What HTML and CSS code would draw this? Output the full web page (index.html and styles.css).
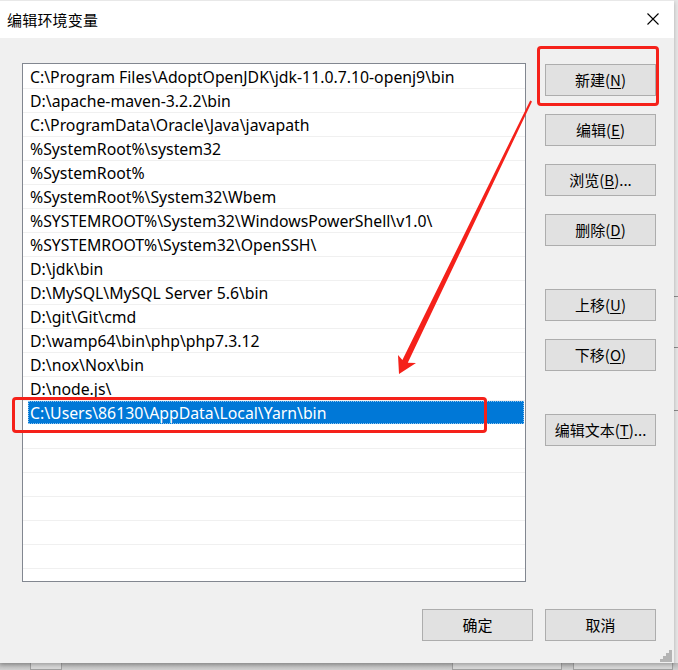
FILE: index.html
```html
<!DOCTYPE html>
<html lang="zh-CN">
<head>
<meta charset="utf-8">
<title>编辑环境变量</title>
<link rel="stylesheet" href="styles.css">
</head>
<body>
<div class="screen">
  <div class="backdrop-right">
    <div class="bd-line l1"></div>
    <div class="bd-line l2"></div>
    <div class="bd-line l3"></div>
  </div>
  <div class="backdrop-bottom">
    <div class="bb-piece p1"></div>
    <div class="bb-piece p2"></div>
    <div class="bb-piece p3"></div>
  </div>
  <div class="window">
    <div class="titlebar">
      <span class="title">编辑环境变量</span>
      <svg class="close" width="12" height="12" viewBox="0 0 12 12"><path d="M0.5 0.5 L11.5 11.5 M11.5 0.5 L0.5 11.5" stroke="#000" stroke-width="1.1" fill="none"/></svg>
    </div>
    <div class="content">
      <div class="main">
        <div class="listbox">
          <div class="row">C:\Program Files\AdoptOpenJDK\jdk-11.0.7.10-openj9\bin</div>
          <div class="row">D:\apache-maven-3.2.2\bin</div>
          <div class="row">C:\ProgramData\Oracle\Java\javapath</div>
          <div class="row">%SystemRoot%\system32</div>
          <div class="row">%SystemRoot%</div>
          <div class="row">%SystemRoot%\System32\Wbem</div>
          <div class="row">%SYSTEMROOT%\System32\WindowsPowerShell\v1.0\</div>
          <div class="row">%SYSTEMROOT%\System32\OpenSSH\</div>
          <div class="row">D:\jdk\bin</div>
          <div class="row">D:\MySQL\MySQL Server 5.6\bin</div>
          <div class="row">D:\git\Git\cmd</div>
          <div class="row">D:\wamp64\bin\php\php7.3.12</div>
          <div class="row">D:\nox\Nox\bin</div>
          <div class="row">D:\node.js\</div>
          <div class="row selected"><span class="sel">C:\Users\86130\AppData\Local\Yarn\bin</span></div>
          <div class="row"></div>
          <div class="row"></div>
          <div class="row"></div>
          <div class="row"></div>
          <div class="row"></div>
          <div class="row"></div>
          <div class="row"></div>
        </div>
        <div class="buttons">
          <div class="group">
            <button class="btn">新建(<u>N</u>)</button>
            <button class="btn">编辑(<u>E</u>)</button>
            <button class="btn">浏览(<u>B</u>)...</button>
            <button class="btn">删除(<u>D</u>)</button>
          </div>
          <div class="group">
            <button class="btn">上移(<u>U</u>)</button>
            <button class="btn">下移(<u>O</u>)</button>
          </div>
          <div class="group">
            <button class="btn">编辑文本(<u>T</u>)...</button>
          </div>
        </div>
      </div>
      <div class="footer">
        <button class="btn">确定</button>
        <button class="btn">取消</button>
      </div>
    </div>
    <svg class="grip" width="12" height="12" viewBox="0 0 12 12" fill="#b4b4b4">
      <rect x="9" y="0" width="3" height="3"/>
      <rect x="6" y="3" width="3" height="3"/><rect x="9" y="3" width="3" height="3"/>
      <rect x="3" y="6" width="3" height="3"/><rect x="6" y="6" width="3" height="3"/><rect x="9" y="6" width="3" height="3"/>
      <rect x="0" y="9" width="3" height="3"/><rect x="3" y="9" width="3" height="3"/><rect x="6" y="9" width="3" height="3"/><rect x="9" y="9" width="3" height="3"/>
    </svg>
  </div>
  <div class="mark mark-new"></div>
  <div class="mark mark-row"></div>
  <svg class="arrow" width="678" height="670" viewBox="0 0 678 670">
    <polygon points="399,374 398,355 402.4,360.1 530.2,100.4 532,101.4 407.8,362.7 416,363" fill="#f5211a"/>
  </svg>
</div>
</body>
</html>
```

FILE: styles.css
```css
* { box-sizing: border-box; }
html, body { margin: 0; padding: 0; }
body {
  width: 678px;
  height: 670px;
  overflow: hidden;
  background: #c9c9c9;
  font-family: "Noto Sans", "Noto Sans CJK SC", sans-serif;
}
.screen {
  position: relative;
  width: 678px;
  height: 670px;
  overflow: hidden;
  background: #cbcbcb;
}
.backdrop-right {
  position: absolute;
  left: 674px;
  top: 0;
  width: 4px;
  height: 670px;
  background: #e6e6e6;
}
.bd-line { position: absolute; left: 0; width: 4px; height: 1px; background: #8a8a8a; }
.bd-line.l1 { top: 296px; }
.bd-line.l2 { top: 347px; }
.bd-line.l3 { top: 410px; }
.backdrop-bottom {
  position: absolute;
  left: 0;
  top: 663px;
  width: 678px;
  height: 7px;
  background: linear-gradient(#b8b8b8, #d0d0d0);
}
.bb-piece { position: absolute; top: 0; height: 7px; border: 1px solid #a0a0a0; border-top: none; background: #d8d8d8; }
.bb-piece.p1 { left: 30px; width: 32px; }
.bb-piece.p2 { left: 452px; width: 110px; }
.bb-piece.p3 { left: 573px; width: 100px; }
.window {
  position: relative;
  width: 674px;
  height: 663px;
  background: #f0f0f0;
  border-top: 1px solid #e8e8e8;
  display: flex;
  flex-direction: column;
  box-shadow: 0 2px 4px rgba(0,0,0,0.25);
}
.titlebar {
  height: 37px;
  background: #fff;
  display: flex;
  align-items: center;
  justify-content: space-between;
  padding: 0 15px 0 7px;
  flex: none;
}
.title {
  font-family: "Noto Sans CJK SC", sans-serif;
  font-size: 15px;
  color: #000;
  letter-spacing: 0.2px;
  margin-top: -1px;
}
.close { display: block; margin-top: -1px; }
.content {
  flex: 1;
  display: flex;
  flex-direction: column;
  padding: 25px 18px 0 22px;
}
.main {
  display: flex;
  gap: 19px;
}
.listbox {
  width: 504px;
  height: 519px;
  background: #fff;
  border: 1px solid #828790;
  padding-top: 1px;
  overflow: hidden;
}
.row {
  height: 24px;
  border-bottom: 1px solid #f0f0f0;
  font-size: 15.8px;
  line-height: 23px;
  padding-top: 1px;
  padding-left: 7px;
  color: #000;
  white-space: nowrap;
}
.row.selected {
  padding-top: 0;
  padding-left: 5px;
  padding-right: 1px;
  border-bottom-color: #fff;
}
.sel {
  display: block;
  background: #0078d7;
  color: #fff;
  padding-left: 2px;
  height: 23px;
  line-height: 24px;
  outline: 1px dotted #8cc4f0;
  outline-offset: -1px;
}
.buttons {
  display: flex;
  flex-direction: column;
  gap: 43px;
  padding-top: 1px;
}
.group {
  display: flex;
  flex-direction: column;
  gap: 18px;
}
.btn {
  width: 111px;
  height: 32px;
  background: #e1e1e1;
  border: 1px solid #adadad;
  border-radius: 0;
  font-family: "Noto Sans CJK SC", sans-serif;
  font-size: 15px;
  color: #000;
  padding: 0;
  margin: 0;
  text-align: center;
  line-height: 28px;
}
.btn u { text-underline-offset: 2px; text-decoration-thickness: 1px; }
.footer {
  display: flex;
  justify-content: flex-end;
  gap: 12px;
  margin-top: 27px;
}
.footer .btn { width: 111px; }
.grip { position: absolute; right: 2px; bottom: 1px; }
.mark {
  position: absolute;
  border: 3px solid #f5211a;
  border-radius: 4px;
}
.mark-new { left: 537px; top: 46px; width: 122px; height: 60px; }
.mark-row { left: 12px; top: 397px; width: 475px; height: 36px; }
.arrow { position: absolute; left: 0; top: 0; pointer-events: none; }
```
